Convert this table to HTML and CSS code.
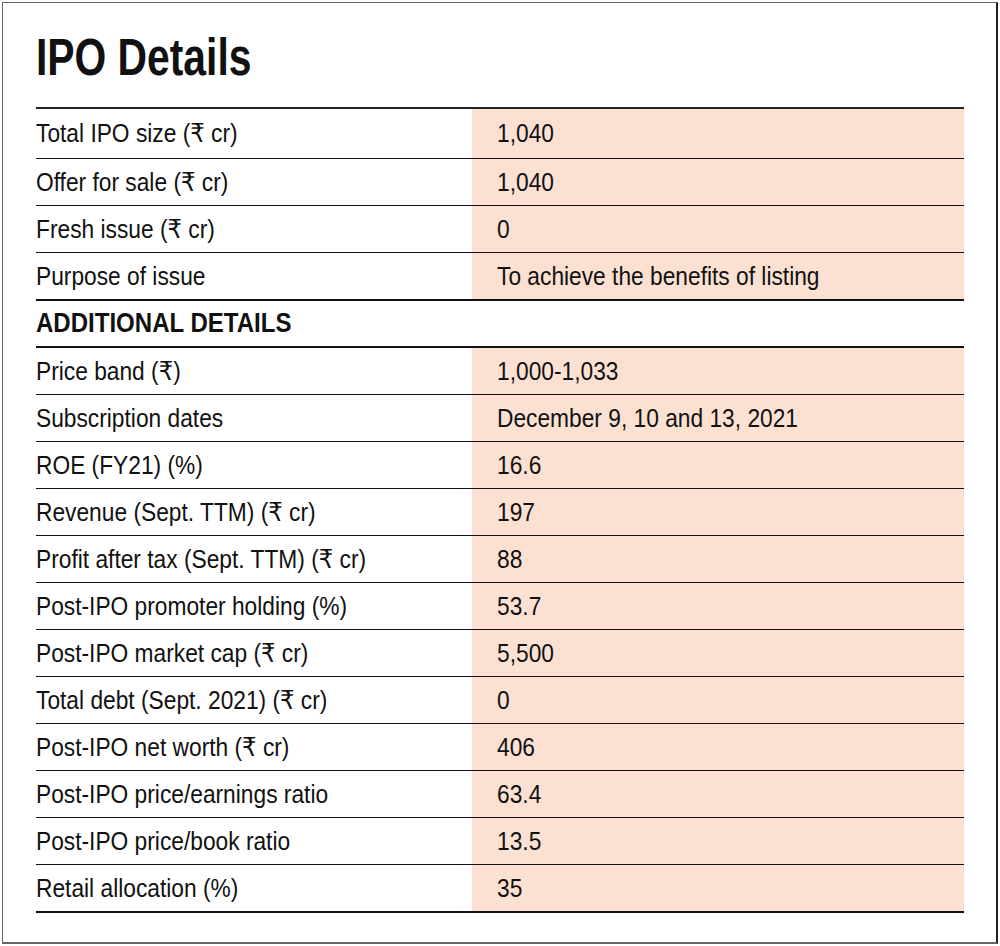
FILE: index.html
```html
<!DOCTYPE html>
<html lang="en">
<head>
<meta charset="utf-8">
<title>IPO Details</title>
<link rel="stylesheet" href="styles.css">
</head>
<body>
<div class="card">
  <h1 class="title"><span class="narrow">IPO Details</span></h1>
  <div class="table">
    <div class="row first"><div class="label"><span class="narrow">Total IPO size (₹ cr)</span></div><div class="value"><span class="narrow">1,040</span></div></div>
    <div class="row"><div class="label"><span class="narrow">Offer for sale (₹ cr)</span></div><div class="value"><span class="narrow">1,040</span></div></div>
    <div class="row"><div class="label"><span class="narrow">Fresh issue (₹ cr)</span></div><div class="value"><span class="narrow">0</span></div></div>
    <div class="row section-end"><div class="label"><span class="narrow">Purpose of issue</span></div><div class="value"><span class="narrow">To achieve the benefits of listing</span></div></div>
    <div class="row header"><div class="label"><span class="narrow">ADDITIONAL DETAILS</span></div></div>
    <div class="row"><div class="label"><span class="narrow">Price band (₹)</span></div><div class="value"><span class="narrow">1,000-1,033</span></div></div>
    <div class="row"><div class="label"><span class="narrow">Subscription dates</span></div><div class="value"><span class="narrow">December 9, 10 and 13, 2021</span></div></div>
    <div class="row"><div class="label"><span class="narrow">ROE (FY21) (%)</span></div><div class="value"><span class="narrow">16.6</span></div></div>
    <div class="row"><div class="label"><span class="narrow">Revenue (Sept. TTM) (₹ cr)</span></div><div class="value"><span class="narrow">197</span></div></div>
    <div class="row"><div class="label"><span class="narrow">Profit after tax (Sept. TTM) (₹ cr)</span></div><div class="value"><span class="narrow">88</span></div></div>
    <div class="row"><div class="label"><span class="narrow">Post-IPO promoter holding (%)</span></div><div class="value"><span class="narrow">53.7</span></div></div>
    <div class="row"><div class="label"><span class="narrow">Post-IPO market cap (₹ cr)</span></div><div class="value"><span class="narrow">5,500</span></div></div>
    <div class="row"><div class="label"><span class="narrow">Total debt (Sept. 2021) (₹ cr)</span></div><div class="value"><span class="narrow">0</span></div></div>
    <div class="row"><div class="label"><span class="narrow">Post-IPO net worth (₹ cr)</span></div><div class="value"><span class="narrow">406</span></div></div>
    <div class="row"><div class="label"><span class="narrow">Post-IPO price/earnings ratio</span></div><div class="value"><span class="narrow">63.4</span></div></div>
    <div class="row"><div class="label"><span class="narrow">Post-IPO price/book ratio</span></div><div class="value"><span class="narrow">13.5</span></div></div>
    <div class="row last"><div class="label"><span class="narrow">Retail allocation (%)</span></div><div class="value"><span class="narrow">35</span></div></div>
  </div>
</div>
</body>
</html>
```
FILE: styles.css
```css
html, body {
  margin: 0;
  padding: 0;
  background: #ffffff;
}

body {
  font-family: "Liberation Sans", Arial, "DejaVu Sans", sans-serif;
  color: #111111;
}

.card {
  margin: 2px;
  height: 942px;
  box-sizing: border-box;
  border: 1px solid #666666;
  border-right: 2px solid #222222;
  border-bottom: 2px solid #666666;
  padding: 0 32px 0 33px;
}

.narrow {
  display: inline-block;
  transform: scaleX(0.875);
  transform-origin: left center;
}

.title {
  margin: 0;
  height: 104px;
  box-sizing: border-box;
  padding-top: 26px;
  font-size: 51px;
  line-height: 58px;
  font-weight: 700;
}

.title .narrow {
  transform: scaleX(0.80);
}

.table {
  border-top: 2px solid #222222;
}

.row {
  display: grid;
  grid-template-columns: 436px 1fr;
  height: 47px;
  box-sizing: border-box;
  border-bottom: 1px solid #111111;
  font-size: 26px;
}

.row.first {
  height: 50px;
}

.row.section-end,
.row.last {
  border-bottom: 2px solid #111111;
  height: 48px;
}

.row.header {
  border-bottom: 2px solid #111111;
  height: 47px;
}

.label,
.value {
  display: flex;
  align-items: center;
  white-space: nowrap;
}

.value {
  background: #fce1d2;
  padding-left: 25px;
}

.header .label {
  font-weight: 700;
  font-size: 27px;
}

.header .narrow {
  transform: scaleX(0.89);
}
```
